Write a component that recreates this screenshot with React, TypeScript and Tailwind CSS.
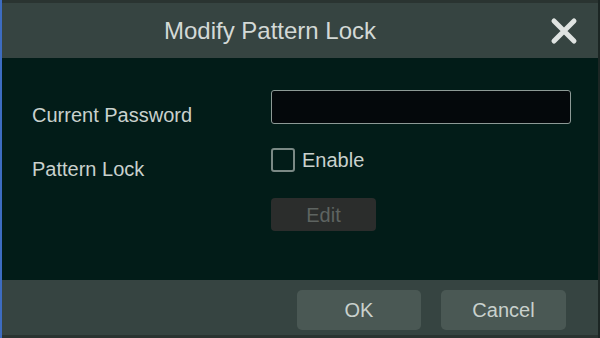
import React from "react";

function CloseIcon() {
  return (
    <svg width="28" height="28" viewBox="0 0 28 28" className="shrink-0">
      <path
        d="M4 4 L24 24 M24 4 L4 24"
        stroke="#dfe3e1"
        strokeWidth="5"
        strokeLinecap="round"
        fill="none"
      />
    </svg>
  );
}

export default function App() {
  return (
    <div
      className="w-[600px] h-[338px] flex flex-col bg-[#27322f] border-l-2 border-l-[#3d6cc0] border-r-2 border-r-[#1c2624] overflow-hidden text-[20px] text-[#c9d1cd]"
      style={{ fontFamily: '"Liberation Sans", Arial, sans-serif' }}
    >
      <div className="h-[3px] bg-[#2a3431]" />

      {/* header */}
      <div className="h-[55px] flex items-center bg-[#364441]">
        <div className="w-[536px] text-center text-[24px] text-[#d3d9d6]">
          Modify Pattern Lock
        </div>
        <div className="ml-[12px]">
          <CloseIcon />
        </div>
      </div>

      {/* body */}
      <div className="flex-1 flex bg-[#021c18]">
        <div className="w-[269px] pl-[30px] pt-[45px] flex flex-col gap-[30px] leading-[24px]">
          <div>Current Password</div>
          <div>Pattern Lock</div>
        </div>
        <div className="flex flex-col pt-[32px]">
          <div className="w-[300px] h-[34px] rounded-[3px] border border-[#8d9a96] bg-[#04080b]" />
          <div className="mt-[24px] flex items-center gap-[7px]">
            <div className="w-[24px] h-[24px] rounded-[3px] border-2 border-[#7b8985]" />
            <span className="leading-[24px]">Enable</span>
          </div>
          <div className="mt-[26px] w-[105px] h-[33px] rounded-[4px] bg-[#2b2d2c] flex items-center justify-center text-[#5e6461]">
            Edit
          </div>
        </div>
      </div>

      {/* footer */}
      <div className="h-[55px] flex items-start justify-end gap-[20px] pt-[10px] pr-[32px] bg-[#364441]">
        <button className="w-[124px] h-[40px] rounded-[5px] bg-[#4a5854] text-[#c9d1cd]">
          OK
        </button>
        <button className="w-[125px] h-[40px] rounded-[5px] bg-[#4a5854] text-[#c9d1cd]">
          Cancel
        </button>
      </div>
      <div className="h-[3px] bg-[#2a3431]" />
    </div>
  );
}
